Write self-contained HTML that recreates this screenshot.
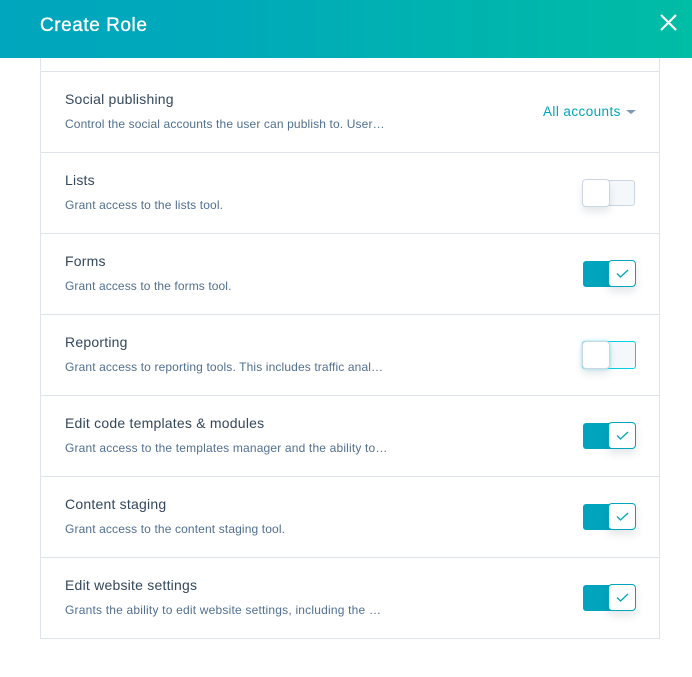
<!DOCTYPE html>
<html>
<head>
<meta charset="utf-8">
<style>
html,body{margin:0;padding:0;background:#fff;}
body{width:692px;height:677px;overflow:hidden;position:relative;font-family:"Liberation Sans",sans-serif;}
.hdr{position:absolute;left:0;top:0;width:692px;height:58px;background:linear-gradient(90deg,#00a6bd 0%,#00a9ba 30%,#00bda5 100%);}
.ttl{position:absolute;left:40px;top:14px;font-size:19px;line-height:24px;color:#fff;letter-spacing:.55px;font-weight:400;-webkit-text-stroke:.35px #fff;}
.box{position:absolute;left:40px;top:58px;width:618px;height:580px;border-left:1px solid #dfe3eb;border-right:1px solid #dfe3eb;border-bottom:1px solid #dfe3eb;}
.ln{position:absolute;left:40px;width:620px;height:1px;background:#dfe3eb;}
.t{position:absolute;left:65px;font-size:14px;line-height:18px;color:#33475b;white-space:nowrap;letter-spacing:.22px;}
.d{position:absolute;left:65px;font-size:12px;line-height:16px;color:#516f90;white-space:nowrap;letter-spacing:.13px;}
.all{position:absolute;left:543px;top:103px;font-size:13.5px;line-height:18px;color:#00a4bd;white-space:nowrap;letter-spacing:.42px;}
.car{position:absolute;left:626px;top:110px;width:0;height:0;border-left:5px solid transparent;border-right:5px solid transparent;border-top:4px solid #7c98b6;}
.tr{position:absolute;box-sizing:border-box;border-radius:3px;}
.kn{position:absolute;box-sizing:border-box;background:#fff;border-radius:4px;}
.off{left:583px;width:52px;height:26px;background:#f5f8fa;border:1px solid #cbd6e2;}
.offk{left:582px;width:28px;height:28px;border:1px solid #cbd6e2;box-shadow:0 5px 8px rgba(45,62,80,.12);}
.on{left:583px;width:40px;height:26px;background:#00a4bd;}
.onk{left:608px;width:28px;height:27px;border:1px solid #00a4bd;box-shadow:0 5px 8px rgba(45,62,80,.12);}
.onk svg{position:absolute;left:7px;top:7px;}
</style>
</head>
<body>
<div class="box"></div>
<div class="ln" style="top:71px"></div>
<div class="ln" style="top:152px"></div>
<div class="ln" style="top:233px"></div>
<div class="ln" style="top:314px"></div>
<div class="ln" style="top:395px"></div>
<div class="ln" style="top:476px"></div>
<div class="ln" style="top:557px"></div>
<div class="hdr"></div>
<div class="ttl">Create Role</div>
<svg style="position:absolute;left:660px;top:14px" width="17" height="17" viewBox="0 0 17 17"><path d="M1 1L16 16M16 1L1 16" stroke="#fff" stroke-width="2.2" fill="none"/></svg>

<div class="t" style="top:90px">Social publishing</div>
<div class="d" style="top:116px">Control the social accounts the user can publish to. User…</div>
<div class="all">All accounts</div><div class="car"></div>

<div class="t" style="top:171px">Lists</div>
<div class="d" style="top:197px">Grant access to the lists tool.</div>
<div class="tr off" style="top:180px"></div><div class="kn offk" style="top:179px"></div>

<div class="t" style="top:252px">Forms</div>
<div class="d" style="top:278px;letter-spacing:.1px">Grant access to the forms tool.</div>
<div class="tr on" style="top:261px"></div><div class="kn onk" style="top:260px"><svg width="13" height="11" viewBox="0 0 13 11"><path d="M1 5.5L4.5 9L12 2" stroke="#00a4bd" stroke-width="1.3" fill="none"/></svg></div>

<div class="t" style="top:333px">Reporting</div>
<div class="d" style="top:359px">Grant access to reporting tools. This includes traffic anal…</div>
<div class="tr off" style="top:341px;left:582px;width:54px;height:28px;border-color:#00d0e4;"></div><div class="kn offk" style="top:341px;box-shadow:0 0 3px #7fe3f0,0 5px 8px rgba(45,62,80,.12);"></div>

<div class="t" style="top:414px">Edit code templates &amp; modules</div>
<div class="d" style="top:440px;letter-spacing:.17px">Grant access to the templates manager and the ability to…</div>
<div class="tr on" style="top:423px"></div><div class="kn onk" style="top:422px"><svg width="13" height="11" viewBox="0 0 13 11"><path d="M1 5.5L4.5 9L12 2" stroke="#00a4bd" stroke-width="1.3" fill="none"/></svg></div>

<div class="t" style="top:495px">Content staging</div>
<div class="d" style="top:521px">Grant access to the content staging tool.</div>
<div class="tr on" style="top:504px"></div><div class="kn onk" style="top:503px"><svg width="13" height="11" viewBox="0 0 13 11"><path d="M1 5.5L4.5 9L12 2" stroke="#00a4bd" stroke-width="1.3" fill="none"/></svg></div>

<div class="t" style="top:576px">Edit website settings</div>
<div class="d" style="top:602px;letter-spacing:.2px">Grants the ability to edit website settings, including the …</div>
<div class="tr on" style="top:585px"></div><div class="kn onk" style="top:584px"><svg width="13" height="11" viewBox="0 0 13 11"><path d="M1 5.5L4.5 9L12 2" stroke="#00a4bd" stroke-width="1.3" fill="none"/></svg></div>
</body>
</html>
